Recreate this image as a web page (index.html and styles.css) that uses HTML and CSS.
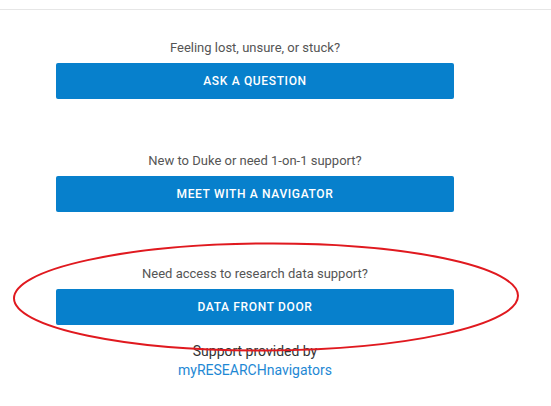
FILE: index.html
```html
<!DOCTYPE html>
<html>
<head>
<meta charset="utf-8">
<link rel="stylesheet" href="styles.css">
</head>
<body>
<div class="topline"></div>
<main class="panel">
  <section class="block first">
    <p class="prompt">Feeling lost, unsure, or stuck?</p>
    <a class="btn" href="#">ASK A QUESTION</a>
  </section>
  <section class="block">
    <p class="prompt">New to Duke or need 1-on-1 support?</p>
    <a class="btn" href="#">MEET WITH A NAVIGATOR</a>
  </section>
  <section class="block">
    <p class="prompt">Need access to research data support?</p>
    <a class="btn" href="#">DATA FRONT DOOR</a>
  </section>
  <footer class="credit">
    <p class="by">Support provided by</p>
    <a class="navlink" href="#">myRESEARCHnavigators</a>
  </footer>
</main>
<svg class="annot" width="551" height="406" viewBox="0 0 551 406">
  <ellipse cx="266" cy="297" rx="252" ry="53.5" fill="none" stroke="#e0191f" stroke-width="2" transform="rotate(-0.3 266 297)"/>
</svg>
</body>
</html>
```
FILE: styles.css
```css
html, body {
  margin: 0;
  padding: 0;
  background: #fff;
}
body {
  font-family: Roboto, "Liberation Sans", sans-serif;
  width: 551px;
  height: 406px;
  overflow: hidden;
  position: relative;
}
.topline {
  height: 9px;
  border-bottom: 1px solid #e6e6e6;
}
.panel {
  width: 510px;
  display: flex;
  flex-direction: column;
}
.block {
  display: flex;
  flex-direction: column;
  align-items: center;
  margin-top: 53px;
}
.block.first {
  margin-top: 29px;
}
.prompt {
  margin: 0 0 7px;
  font-size: 13px;
  line-height: 17px;
  color: #555;
}
.btn {
  display: flex;
  align-items: center;
  justify-content: center;
  width: 398px;
  height: 36px;
  background: #0780cc;
  border-radius: 2px;
  color: #fff;
  text-decoration: none;
  font-size: 12px;
  font-weight: 500;
  letter-spacing: 0.65px;
}
.credit {
  display: flex;
  flex-direction: column;
  align-items: center;
  margin-top: 18px;
}
.by {
  margin: 0 0 2px;
  font-size: 14px;
  line-height: 17px;
  color: #333;
}
.navlink {
  font-size: 14px;
  line-height: 17px;
  color: #1e88d4;
  text-decoration: none;
}
.annot {
  position: absolute;
  left: 0;
  top: 0;
  pointer-events: none;
}
```
